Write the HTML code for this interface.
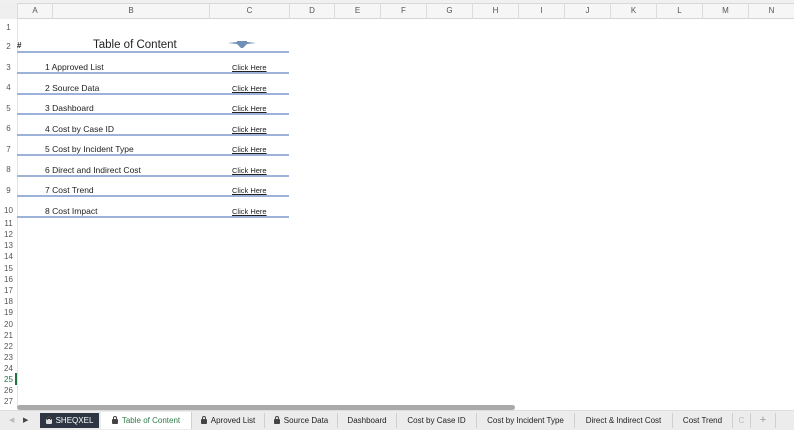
<!DOCTYPE html>
<html><head><meta charset="utf-8"><style>
*{margin:0;padding:0;box-sizing:border-box}
body{width:794px;height:430px;overflow:hidden;background:#fff;font-family:"Liberation Sans",sans-serif;position:relative}
.a{position:absolute}
.hdr{top:3px;height:16px;background:#f6f6f6;border-bottom:1px solid #d4d4d4;border-top:1px solid #d8d8d8;left:0;width:794px}
.ch{top:3px;height:16px;font-size:8px;color:#555;text-align:center;line-height:16px;border-left:1px solid #dcdcdc}
.rn{left:0;width:17px;font-size:8px;color:#555;text-align:center}
.lbl{font-size:8.5px;color:#222;left:45px}
.lk{font-size:7.5px;color:#222;left:232px;text-decoration:underline}
.ul{left:17px;width:272px;height:2px;background:#9db2d8}
.tab{top:413px;height:15px;font-size:8px;line-height:15px;text-align:center;color:#222;border-right:1px solid #d0d0d0;white-space:nowrap}
.lock{display:inline-block;width:6px;height:5px;background:#444;border-radius:1px;position:relative;margin-right:4px;vertical-align:-1px}
.lock:before{content:"";position:absolute;left:1px;top:-3px;width:2px;height:3px;border:1px solid #444;border-bottom:none;border-radius:2px 2px 0 0}
</style></head><body>
<div class="a" style="top:0;left:0;width:794px;height:3px;background:#f0f0f0"></div>
<div class="a hdr"></div>
<div class="a" style="left:0;top:3px;width:17px;height:16px;background:#efefef"></div>
<div class="a ch" style="left:17px;width:35px">A</div>
<div class="a ch" style="left:52px;width:157px">B</div>
<div class="a ch" style="left:209px;width:80px">C</div>
<div class="a ch" style="left:289px;width:45px">D</div>
<div class="a ch" style="left:334px;width:46px">E</div>
<div class="a ch" style="left:380px;width:46px">F</div>
<div class="a ch" style="left:426px;width:46px">G</div>
<div class="a ch" style="left:472px;width:46px">H</div>
<div class="a ch" style="left:518px;width:46px">I</div>
<div class="a ch" style="left:564px;width:46px">J</div>
<div class="a ch" style="left:610px;width:46px">K</div>
<div class="a ch" style="left:656px;width:46px">L</div>
<div class="a ch" style="left:702px;width:46px">M</div>
<div class="a ch" style="left:748px;width:46px">N</div>
<div class="a" style="left:17px;top:19px;width:1px;height:390px;background:#e4e4e4"></div>

<div class="a rn" style="top:23px">1</div>
<div class="a rn" style="top:42px">2</div>
<div class="a rn" style="top:63px">3</div>
<div class="a rn" style="top:83px">4</div>
<div class="a rn" style="top:104px">5</div>
<div class="a rn" style="top:124px">6</div>
<div class="a rn" style="top:145px">7</div>
<div class="a rn" style="top:165px">8</div>
<div class="a rn" style="top:186px">9</div>
<div class="a rn" style="top:206px">10</div>
<div class="a rn" style="top:219px">11</div>
<div class="a rn" style="top:230px">12</div>
<div class="a rn" style="top:241px">13</div>
<div class="a rn" style="top:252px">14</div>
<div class="a rn" style="top:264px">15</div>
<div class="a rn" style="top:275px">16</div>
<div class="a rn" style="top:286px">17</div>
<div class="a rn" style="top:297px">18</div>
<div class="a rn" style="top:308px">19</div>
<div class="a rn" style="top:320px">20</div>
<div class="a rn" style="top:331px">21</div>
<div class="a rn" style="top:342px">22</div>
<div class="a rn" style="top:353px">23</div>
<div class="a rn" style="top:364px">24</div>
<div class="a rn" style="top:375px;color:#217346">25</div>
<div class="a" style="left:15px;top:373px;width:2px;height:12px;background:#217346"></div>
<div class="a rn" style="top:386px">26</div>
<div class="a rn" style="top:397px">27</div>

<div class="a" style="left:17px;top:41px;font-size:8px;font-weight:bold;color:#222">#</div>
<div class="a" style="left:93px;top:39px;font-size:11.5px;color:#222">Table of Content</div>
<svg class="a" style="left:228px;top:41px" width="28" height="8"><polygon points="0,2 9,1 9,0 19,0 19,1 28,2 19,3 15,7 13,7 9,3" fill="#6f8fb8"/></svg>
<div class="a ul" style="top:51px"></div>
<div class="a lbl" style="top:62px">1 Approved List</div><div class="a lk" style="top:63px">Click Here</div><div class="a ul" style="top:72px"></div>
<div class="a lbl" style="top:83px">2 Source Data</div><div class="a lk" style="top:84px">Click Here</div><div class="a ul" style="top:93px"></div>
<div class="a lbl" style="top:103px">3 Dashboard</div><div class="a lk" style="top:104px">Click Here</div><div class="a ul" style="top:113px"></div>
<div class="a lbl" style="top:124px">4 Cost by Case ID</div><div class="a lk" style="top:125px">Click Here</div><div class="a ul" style="top:134px"></div>
<div class="a lbl" style="top:144px">5 Cost by Incident Type</div><div class="a lk" style="top:145px">Click Here</div><div class="a ul" style="top:154px"></div>
<div class="a lbl" style="top:165px">6 Direct and Indirect Cost</div><div class="a lk" style="top:166px">Click Here</div><div class="a ul" style="top:175px"></div>
<div class="a lbl" style="top:185px">7 Cost Trend</div><div class="a lk" style="top:186px">Click Here</div><div class="a ul" style="top:195px"></div>
<div class="a lbl" style="top:206px">8 Cost Impact</div><div class="a lk" style="top:207px">Click Here</div><div class="a ul" style="top:216px"></div>

<div class="a" style="left:17px;top:405px;width:498px;height:5px;background:#aaa;border-radius:3px"></div>
<div class="a" style="left:0;top:410px;width:794px;height:20px;background:#ececec;border-top:1px solid #ddd"></div>
<div class="a" style="left:9px;top:416px;font-size:7px;color:#bbb">◀</div>
<div class="a" style="left:23px;top:416px;font-size:7px;color:#444">▶</div>
<div class="a tab" style="left:40px;width:59px;background:#2d3642;color:#fff;border:none"><span class="lock" style="background:#ddd"></span>SHEQXEL</div>
<div class="a tab" style="left:101px;width:91px;background:#fff;color:#2e7d4a;top:412px;height:17px;line-height:17px"><span class="lock"></span>Table of Content</div>
<div class="a tab" style="left:192px;width:73px"><span class="lock"></span>Aproved List</div>
<div class="a tab" style="left:265px;width:73px"><span class="lock"></span>Source Data</div>
<div class="a tab" style="left:338px;width:59px">Dashboard</div>
<div class="a tab" style="left:397px;width:80px">Cost by Case ID</div>
<div class="a tab" style="left:477px;width:98px">Cost by Incident Type</div>
<div class="a tab" style="left:575px;width:98px">Direct &amp; Indirect Cost</div>
<div class="a tab" style="left:673px;width:60px">Cost Trend</div>
<div class="a tab" style="left:733px;width:18px;color:#bbb">C</div>
<div class="a tab" style="left:751px;width:25px;color:#999;font-size:11px">+</div>
</body></html>
